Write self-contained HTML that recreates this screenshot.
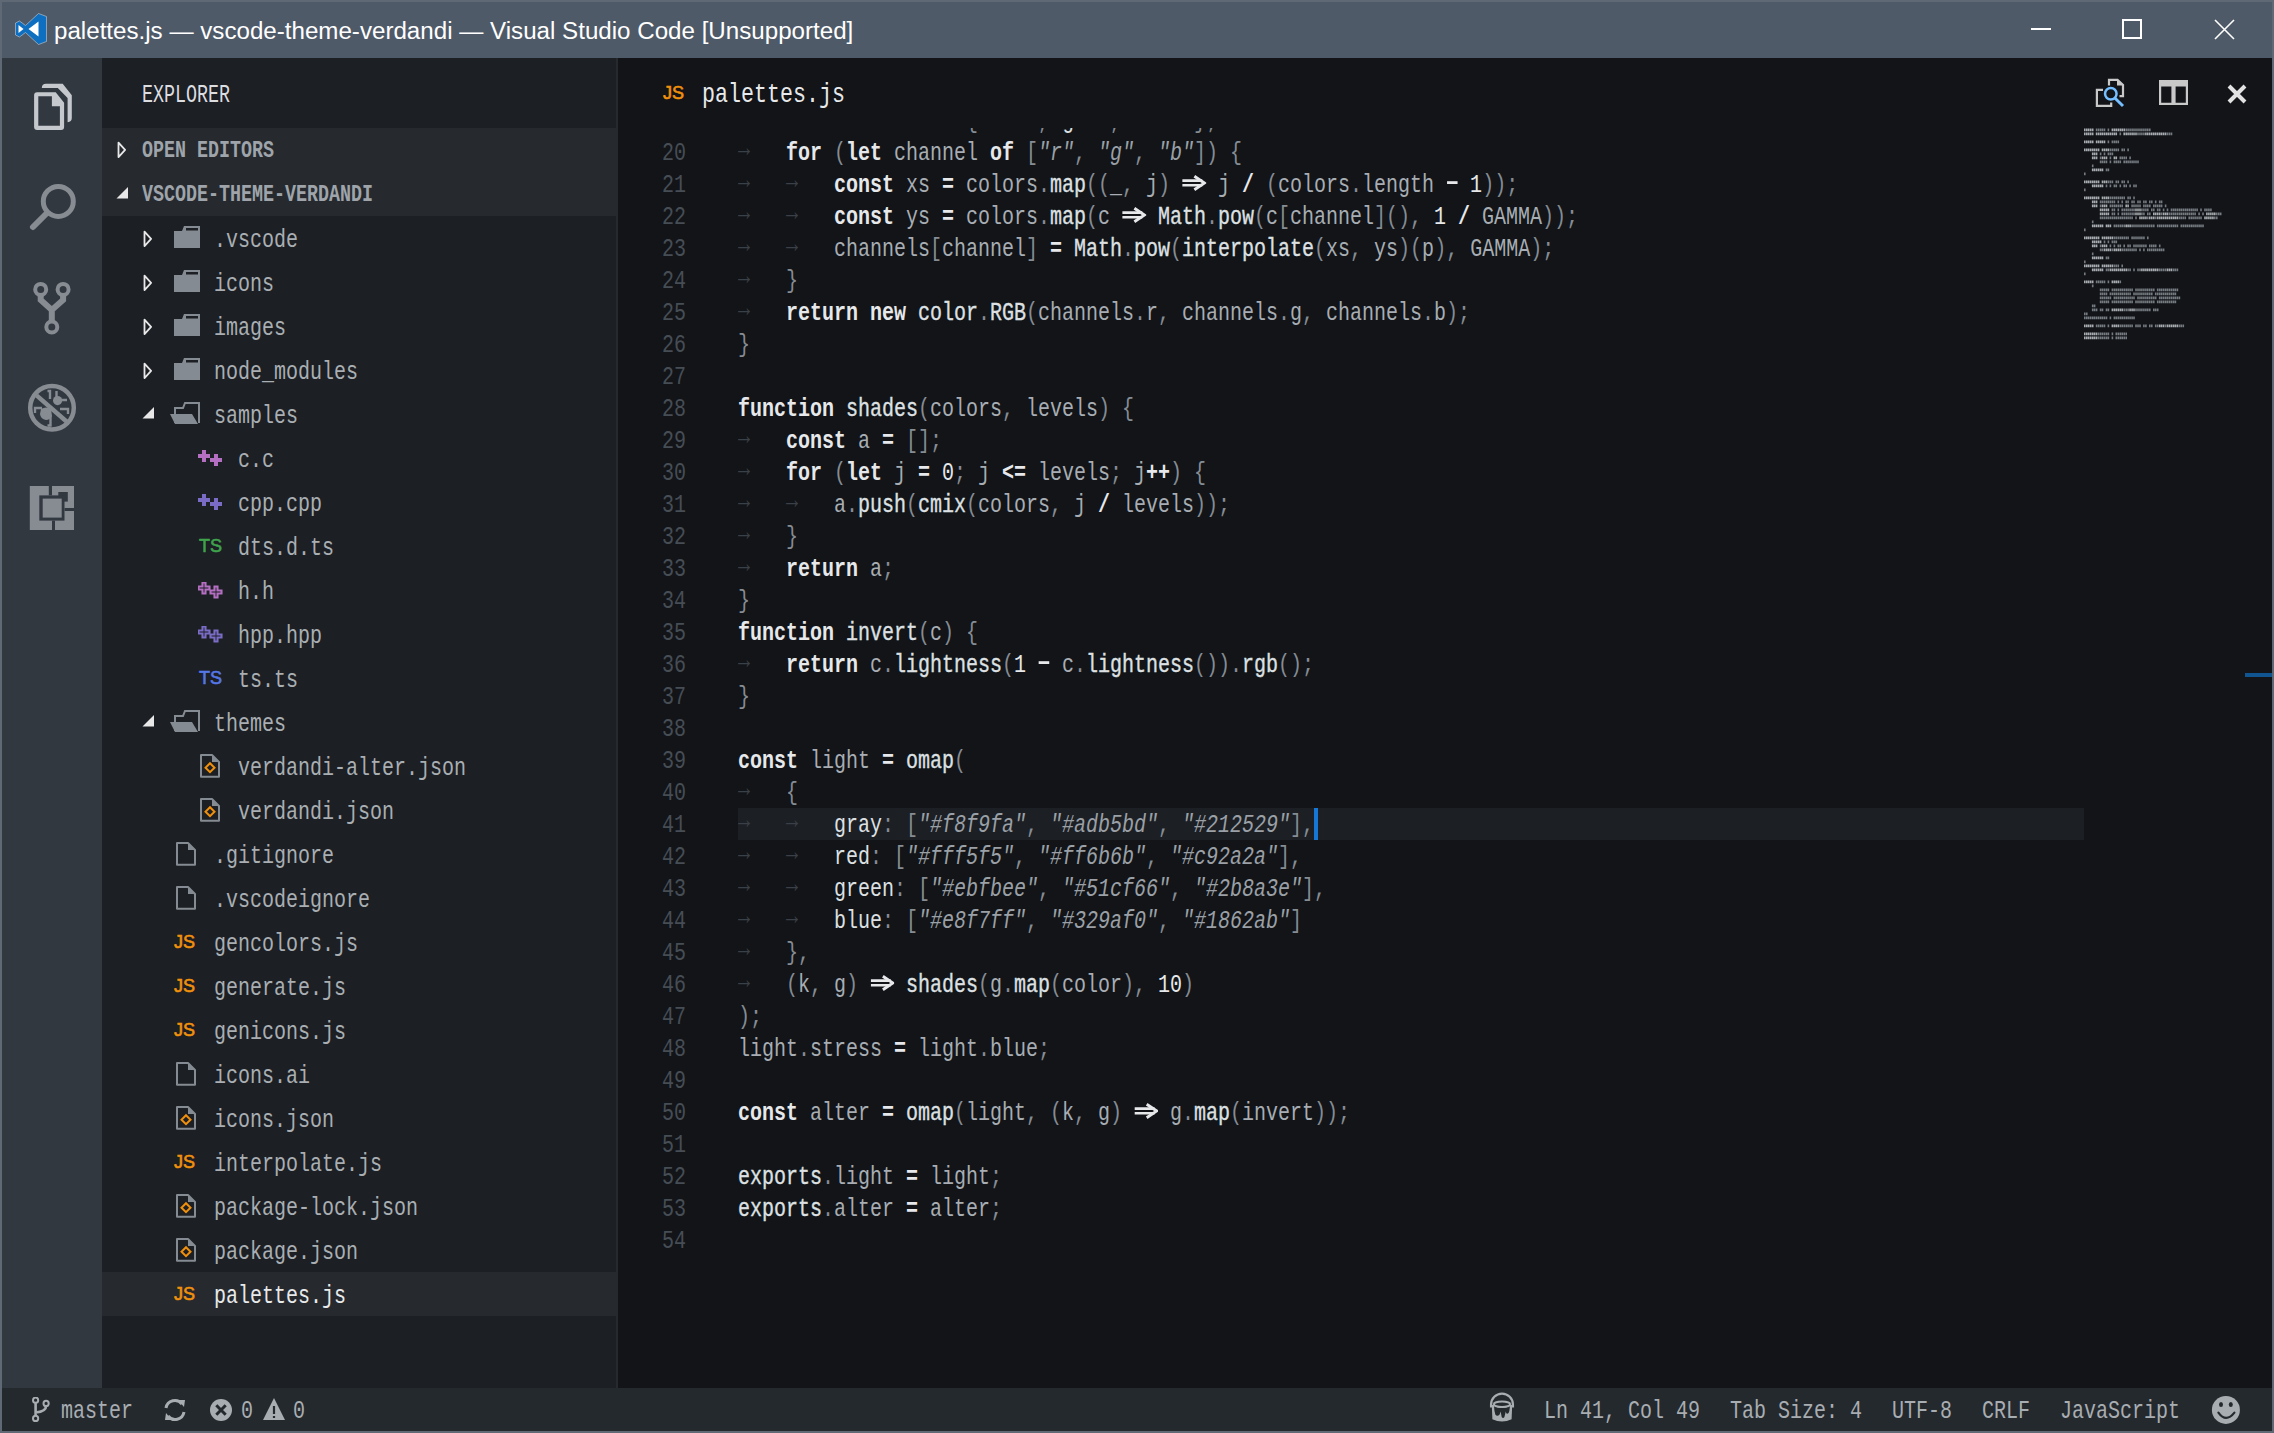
<!DOCTYPE html><html><head><meta charset="utf-8"><style>
*{margin:0;padding:0;box-sizing:border-box}
html,body{width:2274px;height:1433px;overflow:hidden;background:#5f6976}
.abs{position:absolute}
#title{left:2px;top:2px;width:2270px;height:56px;background:#4f5a68}
#act{left:2px;top:58px;width:100px;height:1330px;background:#323840}
#side{left:102px;top:58px;width:516px;height:1330px;background:#1c1f23;border-right:2px solid #262a2f}
#editor{left:618px;top:58px;width:1654px;height:1330px;background:#121418;overflow:hidden}
#status{left:2px;top:1388px;width:2270px;height:43px;background:#24292e}
.mono{font-family:'Liberation Mono', monospace;white-space:pre}
.ln{position:absolute;height:32px;line-height:32px;font-size:26px;transform:scaleX(0.76911);transform-origin:0 0;white-space:pre;font-family:'Liberation Mono', monospace}
.k{color:#e6e8ea;font-weight:bold} .b{color:#dde0e3} .f{color:#dde0e3;-webkit-text-stroke:0.35px #dde0e3} .v{color:#a7adb3} .p{color:#858c93}
.o{color:#e6e8ea;font-weight:bold} .n{color:#e6e8ea} .s{color:#9aa0a6;font-style:italic} .t{color:#3a4047;position:relative;top:-4px}
.num{color:#464d55}
.row{position:absolute;left:0;width:514px;height:44px}
.it{position:absolute;height:44px;line-height:44px;font-size:26px;transform:scaleX(0.76911);transform-origin:0 0;white-space:pre;font-family:'Liberation Mono', monospace;color:#a9aeb3}
</style></head><body><div id="title" class="abs">
<svg class="abs" style="left:12px;top:9px" width="36" height="36" viewBox="0 0 36 36">
<path d="M24.5 2.5 L32.5 5.5 L32.5 30.5 L24.5 33.5 L11.5 21.5 L5.5 26 L1.5 24 L1.5 12 L5.5 10 L11.5 14.5 Z" fill="#0e6fc0" stroke="#c8ccd2" stroke-width="0.6"/>
<path d="M4.5 14 L9.5 18 L4.5 22 Z" fill="#fff"/>
<path d="M24.5 10.5 L24.5 25.5 L14.5 18 Z" fill="#fff"/>
</svg>
<div class="abs" style="left:52px;top:1px;height:56px;line-height:56px;font-family:'Liberation Sans', sans-serif;font-size:24.15px;color:#fff;white-space:pre">palettes.js — vscode-theme-verdandi — Visual Studio Code [Unsupported]</div>
<div class="abs" style="left:2029px;top:26px;width:20px;height:2px;background:#fff"></div>
<div class="abs" style="left:2120px;top:17px;width:20px;height:20px;border:2px solid #fff"></div>
<svg class="abs" style="left:2212px;top:17px" width="21" height="21" viewBox="0 0 21 21"><path d="M1 1L20 20M20 1L1 20" stroke="#fff" stroke-width="1.6"/></svg>
</div><div id="act" class="abs">
<svg class="abs" style="left:0;top:0" width="100" height="500" viewBox="0 0 100 500">
 <path d="M39.8 30 Q40 25.8 44 25.8 L60.7 25.8 L69.8 37.3 L69.8 60 Q69.8 64 65.6 64.2 L65.6 40.1 L55.8 30 Z" fill="#c5c9cd"/>
 <path d="M35.1 34.2 H53.7 L62.1 44.7 V68.9 Q62.1 71.9 59.1 71.9 H35.1 Q32.1 71.9 32.1 68.9 V37.2 Q32.1 34.2 35.1 34.2 Z M36.3 38.2 H49.9 V48.2 H57.9 V67.7 H36.3 Z" fill="#c5c9cd" fill-rule="evenodd"/>
 <circle cx="56.3" cy="143.4" r="15" fill="none" stroke="#878c93" stroke-width="5"/>
 <path d="M45 155 L31 169" stroke="#878c93" stroke-width="6" stroke-linecap="round"/>
 <circle cx="38.7" cy="231.4" r="5.5" fill="none" stroke="#878c93" stroke-width="4"/>
 <circle cx="61.1" cy="231.4" r="5.5" fill="none" stroke="#878c93" stroke-width="4"/>
 <circle cx="49.8" cy="269" r="5.5" fill="none" stroke="#878c93" stroke-width="4"/>
 <path d="M38.7 236 L38.7 242 L49.8 252 L61.1 242 L61.1 236 M49.8 252 L49.8 264" fill="none" stroke="#878c93" stroke-width="6"/>
 <circle cx="50" cy="349.7" r="21.8" fill="none" stroke="#878c93" stroke-width="4.5"/>
 <path d="M34.5 337.4 L64.8 363.7" stroke="#878c93" stroke-width="4.5"/>
 <path d="M39 351 Q44 348 49 351 L50 358 Q48 362 44 362 Q38.5 361 38 356 Z" fill="#878c93"/>
 <circle cx="55.6" cy="342.6" r="4.6" fill="#878c93"/>
 <path d="M33 355 V350 H40 M48.5 358 V367.5 H45.5 M45.5 333 H48 V341 M54.5 333 V339 M57 342 H65 M58 351 H66 V356" fill="none" stroke="#878c93" stroke-width="2.4"/>
 <rect x="27.8" y="428" width="44.2" height="44" fill="#878c93"/>
 <rect x="46.8" y="428" width="3.2" height="9.4" fill="#323840"/>
 <rect x="50" y="462.6" width="3" height="9.4" fill="#323840"/>
 <rect x="62.5" y="450" width="9.5" height="3" fill="#323840"/>
 <rect x="56.3" y="434" width="9.5" height="9.6" fill="#323840"/>
 <rect x="37.3" y="437.4" width="25.2" height="25.2" fill="#323840"/>
 <rect x="40.7" y="440.6" width="19" height="19" fill="#878c93"/>
</svg>
</div><div id="side" class="abs"><div class="abs mono" style="left:40px;top:2px;height:72px;line-height:72px;font-size:25px;color:#dcdde0"><span style="display:inline-block;transform:scaleX(0.7332);transform-origin:0 0">EXPLORER</span></div><div class="abs" style="left:0;top:70px;width:516px;height:44px;background:#262a2f"><svg class="abs" style="left:15px;top:13px" width="10" height="18"><path d="M1.5 1.6 L1.5 16.1 L8.1 8.85 Z" fill="none" stroke="#e8e8e8" stroke-width="1.8" stroke-linejoin="round"/></svg>
<div class="abs mono" style="left:40px;top:1px;height:44px;line-height:44px;font-size:24px;font-weight:bold;color:#9ea4aa"><span style="display:inline-block;transform:scaleX(0.7638);transform-origin:0 0">OPEN EDITORS</span></div></div><div class="abs" style="left:0;top:114px;width:516px;height:44px;background:#262a2f"><svg class="abs" style="left:14px;top:15px" width="12" height="12"><path d="M12 0 L12 11.5 L0.5 11.5 Z" fill="#e8e8e8"/></svg>
<div class="abs mono" style="left:40px;top:1px;height:44px;line-height:44px;font-size:24px;font-weight:bold;color:#9ea4aa"><span style="display:inline-block;transform:scaleX(0.7638);transform-origin:0 0">VSCODE-THEME-VERDANDI</span></div></div><div class="row" style="top:158px;"></div><svg class="abs" style="left:41px;top:172px" width="10" height="18"><path d="M1.5 1.6 L1.5 16.1 L8.1 8.85 Z" fill="none" stroke="#e8e8e8" stroke-width="1.8" stroke-linejoin="round"/></svg><svg class="abs" style="left:72px;top:168px" width="28" height="24" viewBox="0 0 28 24"><path d="M0 5 L8 5 L10 0 L26 0 L26 22 L0 22 Z" fill="#858b92"/><rect x="12" y="2" width="12" height="2.5" fill="#1c1f23"/></svg><div class="it" style="left:112px;top:160px;color:#a9aeb3">.vscode</div><div class="row" style="top:202px;"></div><svg class="abs" style="left:41px;top:216px" width="10" height="18"><path d="M1.5 1.6 L1.5 16.1 L8.1 8.85 Z" fill="none" stroke="#e8e8e8" stroke-width="1.8" stroke-linejoin="round"/></svg><svg class="abs" style="left:72px;top:212px" width="28" height="24" viewBox="0 0 28 24"><path d="M0 5 L8 5 L10 0 L26 0 L26 22 L0 22 Z" fill="#858b92"/><rect x="12" y="2" width="12" height="2.5" fill="#1c1f23"/></svg><div class="it" style="left:112px;top:204px;color:#a9aeb3">icons</div><div class="row" style="top:246px;"></div><svg class="abs" style="left:41px;top:260px" width="10" height="18"><path d="M1.5 1.6 L1.5 16.1 L8.1 8.85 Z" fill="none" stroke="#e8e8e8" stroke-width="1.8" stroke-linejoin="round"/></svg><svg class="abs" style="left:72px;top:256px" width="28" height="24" viewBox="0 0 28 24"><path d="M0 5 L8 5 L10 0 L26 0 L26 22 L0 22 Z" fill="#858b92"/><rect x="12" y="2" width="12" height="2.5" fill="#1c1f23"/></svg><div class="it" style="left:112px;top:248px;color:#a9aeb3">images</div><div class="row" style="top:290px;"></div><svg class="abs" style="left:41px;top:304px" width="10" height="18"><path d="M1.5 1.6 L1.5 16.1 L8.1 8.85 Z" fill="none" stroke="#e8e8e8" stroke-width="1.8" stroke-linejoin="round"/></svg><svg class="abs" style="left:72px;top:300px" width="28" height="24" viewBox="0 0 28 24"><path d="M0 5 L8 5 L10 0 L26 0 L26 22 L0 22 Z" fill="#858b92"/><rect x="12" y="2" width="12" height="2.5" fill="#1c1f23"/></svg><div class="it" style="left:112px;top:292px;color:#a9aeb3">node_modules</div><div class="row" style="top:334px;"></div><svg class="abs" style="left:40px;top:349px" width="12" height="12"><path d="M12 0 L12 11.5 L0.5 11.5 Z" fill="#e8e8e8"/></svg><svg class="abs" style="left:68px;top:344px" width="32" height="24" viewBox="0 0 32 24"><path d="M5 21 L5 6 L13 6 L15 1 L29 1 L29 21" fill="none" stroke="#858b92" stroke-width="2"/><path d="M0 12 L22 12 L28 22 L5 22 Z" fill="#858b92"/></svg><div class="it" style="left:112px;top:336px;color:#a9aeb3">samples</div><div class="row" style="top:378px;"></div><svg class="abs" style="left:96px;top:392px" width="26" height="18" viewBox="0 0 26 18"><path d="M0 4 L12 4 L12 8 L0 8 Z M4 0 L8 0 L8 12 L4 12 Z M12 8 L24 8 L24 12 L12 12 Z M16 4 L20 4 L20 16 L16 16 Z" fill="#b46fc2"/></svg><div class="it" style="left:136px;top:380px;color:#a9aeb3">c.c</div><div class="row" style="top:422px;"></div><svg class="abs" style="left:96px;top:436px" width="26" height="18" viewBox="0 0 26 18"><path d="M0 4 L12 4 L12 8 L0 8 Z M4 0 L8 0 L8 12 L4 12 Z M12 8 L24 8 L24 12 L12 12 Z M16 4 L20 4 L20 16 L16 16 Z" fill="#7a6cc6"/></svg><div class="it" style="left:136px;top:424px;color:#a9aeb3">cpp.cpp</div><div class="row" style="top:466px;"></div><div class="abs" style="left:97px;top:478px;font-family:'Liberation Sans', sans-serif;font-size:18px;-webkit-text-stroke:0.6px #3fa34d;line-height:20px;color:#3fa34d;white-space:pre">TS</div><div class="it" style="left:136px;top:468px;color:#a9aeb3">dts.d.ts</div><div class="row" style="top:510px;"></div><svg class="abs" style="left:96px;top:524px" width="26" height="18" viewBox="0 0 26 18"><path d="M4.5 0.5 L7.5 0.5 L7.5 4.5 L11.5 4.5 L11.5 7.5 L7.5 7.5 L7.5 11.5 L4.5 11.5 L4.5 7.5 L0.5 7.5 L0.5 4.5 L4.5 4.5 Z M16.5 4.5 L19.5 4.5 L19.5 8.5 L23.5 8.5 L23.5 11.5 L19.5 11.5 L19.5 15.5 L16.5 15.5 L16.5 11.5 L12.5 11.5 L12.5 8.5 L16.5 8.5 Z" fill="none" stroke="#b46fc2" stroke-width="2.1"/></svg><div class="it" style="left:136px;top:512px;color:#a9aeb3">h.h</div><div class="row" style="top:554px;"></div><svg class="abs" style="left:96px;top:568px" width="26" height="18" viewBox="0 0 26 18"><path d="M4.5 0.5 L7.5 0.5 L7.5 4.5 L11.5 4.5 L11.5 7.5 L7.5 7.5 L7.5 11.5 L4.5 11.5 L4.5 7.5 L0.5 7.5 L0.5 4.5 L4.5 4.5 Z M16.5 4.5 L19.5 4.5 L19.5 8.5 L23.5 8.5 L23.5 11.5 L19.5 11.5 L19.5 15.5 L16.5 15.5 L16.5 11.5 L12.5 11.5 L12.5 8.5 L16.5 8.5 Z" fill="none" stroke="#7a6cc6" stroke-width="2.1"/></svg><div class="it" style="left:136px;top:556px;color:#a9aeb3">hpp.hpp</div><div class="row" style="top:598px;"></div><div class="abs" style="left:97px;top:610px;font-family:'Liberation Sans', sans-serif;font-size:18px;-webkit-text-stroke:0.6px #5577e8;line-height:20px;color:#5577e8;white-space:pre">TS</div><div class="it" style="left:136px;top:600px;color:#a9aeb3">ts.ts</div><div class="row" style="top:642px;"></div><svg class="abs" style="left:40px;top:657px" width="12" height="12"><path d="M12 0 L12 11.5 L0.5 11.5 Z" fill="#e8e8e8"/></svg><svg class="abs" style="left:68px;top:652px" width="32" height="24" viewBox="0 0 32 24"><path d="M5 21 L5 6 L13 6 L15 1 L29 1 L29 21" fill="none" stroke="#858b92" stroke-width="2"/><path d="M0 12 L22 12 L28 22 L5 22 Z" fill="#858b92"/></svg><div class="it" style="left:112px;top:644px;color:#a9aeb3">themes</div><div class="row" style="top:686px;"></div><svg class="abs" style="left:97px;top:696px" width="22" height="26" viewBox="0 0 22 26"><path d="M2 1 L13 1 L20 8 L20 22.8 L2 22.8 Z" fill="none" stroke="#858b92" stroke-width="2" stroke-linejoin="round"/><path d="M13 1 L20 8 L13 8 Z" fill="#858b92"/><path d="M11 9.2 L15.5 13.7 L11 18.2 L6.5 13.7 Z" fill="none" stroke="#f0900c" stroke-width="2"/></svg><div class="it" style="left:136px;top:688px;color:#a9aeb3">verdandi-alter.json</div><div class="row" style="top:730px;"></div><svg class="abs" style="left:97px;top:740px" width="22" height="26" viewBox="0 0 22 26"><path d="M2 1 L13 1 L20 8 L20 22.8 L2 22.8 Z" fill="none" stroke="#858b92" stroke-width="2" stroke-linejoin="round"/><path d="M13 1 L20 8 L13 8 Z" fill="#858b92"/><path d="M11 9.2 L15.5 13.7 L11 18.2 L6.5 13.7 Z" fill="none" stroke="#f0900c" stroke-width="2"/></svg><div class="it" style="left:136px;top:732px;color:#a9aeb3">verdandi.json</div><div class="row" style="top:774px;"></div><svg class="abs" style="left:73px;top:784px" width="22" height="26" viewBox="0 0 22 26"><path d="M2 1 L13 1 L20 8 L20 22.8 L2 22.8 Z" fill="none" stroke="#858b92" stroke-width="2" stroke-linejoin="round"/><path d="M13 1 L20 8 L13 8 Z" fill="#858b92"/></svg><div class="it" style="left:112px;top:776px;color:#a9aeb3">.gitignore</div><div class="row" style="top:818px;"></div><svg class="abs" style="left:73px;top:828px" width="22" height="26" viewBox="0 0 22 26"><path d="M2 1 L13 1 L20 8 L20 22.8 L2 22.8 Z" fill="none" stroke="#858b92" stroke-width="2" stroke-linejoin="round"/><path d="M13 1 L20 8 L13 8 Z" fill="#858b92"/></svg><div class="it" style="left:112px;top:820px;color:#a9aeb3">.vscodeignore</div><div class="row" style="top:862px;"></div><div class="abs" style="left:72px;top:874px;font-family:'Liberation Sans', sans-serif;font-size:18px;-webkit-text-stroke:0.6px #f0900c;line-height:20px;color:#f0900c;white-space:pre">JS</div><div class="it" style="left:112px;top:864px;color:#a9aeb3">gencolors.js</div><div class="row" style="top:906px;"></div><div class="abs" style="left:72px;top:918px;font-family:'Liberation Sans', sans-serif;font-size:18px;-webkit-text-stroke:0.6px #f0900c;line-height:20px;color:#f0900c;white-space:pre">JS</div><div class="it" style="left:112px;top:908px;color:#a9aeb3">generate.js</div><div class="row" style="top:950px;"></div><div class="abs" style="left:72px;top:962px;font-family:'Liberation Sans', sans-serif;font-size:18px;-webkit-text-stroke:0.6px #f0900c;line-height:20px;color:#f0900c;white-space:pre">JS</div><div class="it" style="left:112px;top:952px;color:#a9aeb3">genicons.js</div><div class="row" style="top:994px;"></div><svg class="abs" style="left:73px;top:1004px" width="22" height="26" viewBox="0 0 22 26"><path d="M2 1 L13 1 L20 8 L20 22.8 L2 22.8 Z" fill="none" stroke="#858b92" stroke-width="2" stroke-linejoin="round"/><path d="M13 1 L20 8 L13 8 Z" fill="#858b92"/></svg><div class="it" style="left:112px;top:996px;color:#a9aeb3">icons.ai</div><div class="row" style="top:1038px;"></div><svg class="abs" style="left:73px;top:1048px" width="22" height="26" viewBox="0 0 22 26"><path d="M2 1 L13 1 L20 8 L20 22.8 L2 22.8 Z" fill="none" stroke="#858b92" stroke-width="2" stroke-linejoin="round"/><path d="M13 1 L20 8 L13 8 Z" fill="#858b92"/><path d="M11 9.2 L15.5 13.7 L11 18.2 L6.5 13.7 Z" fill="none" stroke="#f0900c" stroke-width="2"/></svg><div class="it" style="left:112px;top:1040px;color:#a9aeb3">icons.json</div><div class="row" style="top:1082px;"></div><div class="abs" style="left:72px;top:1094px;font-family:'Liberation Sans', sans-serif;font-size:18px;-webkit-text-stroke:0.6px #f0900c;line-height:20px;color:#f0900c;white-space:pre">JS</div><div class="it" style="left:112px;top:1084px;color:#a9aeb3">interpolate.js</div><div class="row" style="top:1126px;"></div><svg class="abs" style="left:73px;top:1136px" width="22" height="26" viewBox="0 0 22 26"><path d="M2 1 L13 1 L20 8 L20 22.8 L2 22.8 Z" fill="none" stroke="#858b92" stroke-width="2" stroke-linejoin="round"/><path d="M13 1 L20 8 L13 8 Z" fill="#858b92"/><path d="M11 9.2 L15.5 13.7 L11 18.2 L6.5 13.7 Z" fill="none" stroke="#f0900c" stroke-width="2"/></svg><div class="it" style="left:112px;top:1128px;color:#a9aeb3">package-lock.json</div><div class="row" style="top:1170px;"></div><svg class="abs" style="left:73px;top:1180px" width="22" height="26" viewBox="0 0 22 26"><path d="M2 1 L13 1 L20 8 L20 22.8 L2 22.8 Z" fill="none" stroke="#858b92" stroke-width="2" stroke-linejoin="round"/><path d="M13 1 L20 8 L13 8 Z" fill="#858b92"/><path d="M11 9.2 L15.5 13.7 L11 18.2 L6.5 13.7 Z" fill="none" stroke="#f0900c" stroke-width="2"/></svg><div class="it" style="left:112px;top:1172px;color:#a9aeb3">package.json</div><div class="row" style="top:1214px;background:#262a2f;"></div><div class="abs" style="left:72px;top:1226px;font-family:'Liberation Sans', sans-serif;font-size:18px;-webkit-text-stroke:0.6px #f0900c;line-height:20px;color:#f0900c;white-space:pre">JS</div><div class="it" style="left:112px;top:1216px;color:#e8e9eb">palettes.js</div></div><div id="editor" class="abs"><div class="abs" style="left:45px;top:25px;font-family:'Liberation Sans', sans-serif;font-size:18px;-webkit-text-stroke:0.6px #f0900c;line-height:20px;color:#f0900c;white-space:pre">JS</div><div class="abs mono" style="left:84px;top:15px;height:44px;line-height:44px;font-size:28px;color:#e8e9eb"><span style="display:inline-block;transform:scaleX(0.7737);transform-origin:0 0">palettes.js</span></div><svg class="abs" style="left:1470px;top:14px" width="40" height="40" viewBox="0 0 40 40">
<path d="M21 13.5 V7.8 H29.5 L35 13 V24.1 H31.5" fill="none" stroke="#c8c8c8" stroke-width="2.2"/>
<path d="M29 6.7 L36.1 13.5 L29 13.5 Z" fill="#c8c8c8"/>
<path d="M15 17.9 H8.9 V33.9 H23.2 V30.5" fill="none" stroke="#c8c8c8" stroke-width="2.2"/>
<circle cx="22.8" cy="21.8" r="5.75" fill="none" stroke="#75beff" stroke-width="2.5"/>
<path d="M26.6 25.8 L35 34" stroke="#75beff" stroke-width="3"/>
</svg><svg class="abs" style="left:1541px;top:22px" width="30" height="26" viewBox="0 0 30 26">
<path d="M0 0 H29 V25 H0 Z M2.2 6.5 V22.8 H12.4 V6.5 Z M16.6 6.5 V22.8 H26.8 V6.5 Z" fill="#c8c8c8" fill-rule="evenodd"/>
</svg><svg class="abs" style="left:1609px;top:26px" width="20" height="20" viewBox="0 0 20 20">
<path d="M2 2 L18 18 M18 2 L2 18" stroke="#e2e2e2" stroke-width="4"/>
</svg><div class="abs" style="left:0;top:70px;width:1654px;height:1260px;overflow:hidden"><div class="abs" style="left:120px;top:680px;width:1346px;height:32px;background:#1c1f24"></div><div class="ln num" style="left:44px;top:-23px">19</div><div class="ln" style="left:120px;top:-23px"><span class="t">→   </span><span class="k">let</span><span class="v"> channels </span><span class="o">=</span><span class="p"> { </span><span class="b">r</span><span class="p">: </span><span class="n">0</span><span class="p">, </span><span class="b">g</span><span class="p">: </span><span class="n">0</span><span class="p">, </span><span class="b">b</span><span class="p">: </span><span class="n">0</span><span class="p"> };</span></div><div class="ln num" style="left:44px;top:9px">20</div><div class="ln" style="left:120px;top:9px"><span class="t">→   </span><span class="k">for</span><span class="p"> (</span><span class="k">let</span><span class="v"> channel </span><span class="k">of</span><span class="p"> [</span><span class="s">"r"</span><span class="p">, </span><span class="s">"g"</span><span class="p">, </span><span class="s">"b"</span><span class="p">])</span><span class="p"> {</span></div><div class="ln num" style="left:44px;top:41px">21</div><div class="ln" style="left:120px;top:41px"><span class="t">→   </span><span class="t">→   </span><span class="k">const</span><span class="v"> xs </span><span class="o">=</span><span class="v"> colors</span><span class="p">.</span><span class="f">map</span><span class="p">((</span><span class="v">_</span><span class="p">, </span><span class="v">j</span><span class="p">) </span><span style="display:inline-block;width:31.205px;height:32px;vertical-align:top"><svg width="31.205" height="32" viewBox="0 0 24 32" preserveAspectRatio="none" style="display:block"><path d="M0.6 11.6 H20.5 M0.6 16.3 H20.5" stroke="#e6e8ea" stroke-width="2.6" fill="none"/><path d="M12.6 7.2 L22.6 13.95 L12.6 20.7" stroke="#e6e8ea" stroke-width="2.9" fill="none"/></svg></span><span class="v"> j </span><span class="o">/</span><span class="p"> (</span><span class="v">colors</span><span class="p">.</span><span class="v">length </span><span style="display:inline-block;width:15.603px;height:32px;vertical-align:top"><svg width="15.603" height="32" viewBox="0 0 12 32" preserveAspectRatio="none" style="display:block"><rect x="0.7" y="12.2" width="10.6" height="2.8" fill="#e6e8ea"/></svg></span><span class="n"> 1</span><span class="p">));</span></div><div class="ln num" style="left:44px;top:73px">22</div><div class="ln" style="left:120px;top:73px"><span class="t">→   </span><span class="t">→   </span><span class="k">const</span><span class="v"> ys </span><span class="o">=</span><span class="v"> colors</span><span class="p">.</span><span class="f">map</span><span class="p">(</span><span class="v">c </span><span style="display:inline-block;width:31.205px;height:32px;vertical-align:top"><svg width="31.205" height="32" viewBox="0 0 24 32" preserveAspectRatio="none" style="display:block"><path d="M0.6 11.6 H20.5 M0.6 16.3 H20.5" stroke="#e6e8ea" stroke-width="2.6" fill="none"/><path d="M12.6 7.2 L22.6 13.95 L12.6 20.7" stroke="#e6e8ea" stroke-width="2.9" fill="none"/></svg></span><span class="f"> Math</span><span class="p">.</span><span class="f">pow</span><span class="p">(</span><span class="v">c</span><span class="p">[</span><span class="v">channel</span><span class="p">](), </span><span class="n">1 </span><span class="o">/</span><span class="v"> GAMMA</span><span class="p">));</span></div><div class="ln num" style="left:44px;top:105px">23</div><div class="ln" style="left:120px;top:105px"><span class="t">→   </span><span class="t">→   </span><span class="v">channels</span><span class="p">[</span><span class="v">channel</span><span class="p">] </span><span class="o">=</span><span class="f"> Math</span><span class="p">.</span><span class="f">pow</span><span class="p">(</span><span class="f">interpolate</span><span class="p">(</span><span class="v">xs</span><span class="p">, </span><span class="v">ys</span><span class="p">)(</span><span class="v">p</span><span class="p">), </span><span class="v">GAMMA</span><span class="p">);</span></div><div class="ln num" style="left:44px;top:137px">24</div><div class="ln" style="left:120px;top:137px"><span class="t">→   </span><span class="p">}</span></div><div class="ln num" style="left:44px;top:169px">25</div><div class="ln" style="left:120px;top:169px"><span class="t">→   </span><span class="k">return new</span><span class="f"> color</span><span class="p">.</span><span class="f">RGB</span><span class="p">(</span><span class="v">channels</span><span class="p">.</span><span class="v">r</span><span class="p">, </span><span class="v">channels</span><span class="p">.</span><span class="v">g</span><span class="p">, </span><span class="v">channels</span><span class="p">.</span><span class="v">b</span><span class="p">);</span></div><div class="ln num" style="left:44px;top:201px">26</div><div class="ln" style="left:120px;top:201px"><span class="p">}</span></div><div class="ln num" style="left:44px;top:233px">27</div><div class="ln" style="left:120px;top:233px"></div><div class="ln num" style="left:44px;top:265px">28</div><div class="ln" style="left:120px;top:265px"><span class="k">function</span><span class="f"> shades</span><span class="p">(</span><span class="v">colors</span><span class="p">, </span><span class="v">levels</span><span class="p">) {</span></div><div class="ln num" style="left:44px;top:297px">29</div><div class="ln" style="left:120px;top:297px"><span class="t">→   </span><span class="k">const</span><span class="v"> a </span><span class="o">=</span><span class="p"> [];</span></div><div class="ln num" style="left:44px;top:329px">30</div><div class="ln" style="left:120px;top:329px"><span class="t">→   </span><span class="k">for</span><span class="p"> (</span><span class="k">let</span><span class="v"> j </span><span class="o">=</span><span class="n"> 0</span><span class="p">; </span><span class="v">j </span><span class="o">&lt;=</span><span class="v"> levels</span><span class="p">; </span><span class="v">j</span><span class="o">++</span><span class="p">) {</span></div><div class="ln num" style="left:44px;top:361px">31</div><div class="ln" style="left:120px;top:361px"><span class="t">→   </span><span class="t">→   </span><span class="v">a</span><span class="p">.</span><span class="f">push</span><span class="p">(</span><span class="f">cmix</span><span class="p">(</span><span class="v">colors</span><span class="p">, </span><span class="v">j </span><span class="o">/</span><span class="v"> levels</span><span class="p">));</span></div><div class="ln num" style="left:44px;top:393px">32</div><div class="ln" style="left:120px;top:393px"><span class="t">→   </span><span class="p">}</span></div><div class="ln num" style="left:44px;top:425px">33</div><div class="ln" style="left:120px;top:425px"><span class="t">→   </span><span class="k">return</span><span class="v"> a</span><span class="p">;</span></div><div class="ln num" style="left:44px;top:457px">34</div><div class="ln" style="left:120px;top:457px"><span class="p">}</span></div><div class="ln num" style="left:44px;top:489px">35</div><div class="ln" style="left:120px;top:489px"><span class="k">function</span><span class="f"> invert</span><span class="p">(</span><span class="v">c</span><span class="p">) {</span></div><div class="ln num" style="left:44px;top:521px">36</div><div class="ln" style="left:120px;top:521px"><span class="t">→   </span><span class="k">return</span><span class="v"> c</span><span class="p">.</span><span class="f">lightness</span><span class="p">(</span><span class="n">1 </span><span style="display:inline-block;width:15.603px;height:32px;vertical-align:top"><svg width="15.603" height="32" viewBox="0 0 12 32" preserveAspectRatio="none" style="display:block"><rect x="0.7" y="12.2" width="10.6" height="2.8" fill="#e6e8ea"/></svg></span><span class="v"> c</span><span class="p">.</span><span class="f">lightness</span><span class="p">()).</span><span class="f">rgb</span><span class="p">();</span></div><div class="ln num" style="left:44px;top:553px">37</div><div class="ln" style="left:120px;top:553px"><span class="p">}</span></div><div class="ln num" style="left:44px;top:585px">38</div><div class="ln" style="left:120px;top:585px"></div><div class="ln num" style="left:44px;top:617px">39</div><div class="ln" style="left:120px;top:617px"><span class="k">const</span><span class="v"> light </span><span class="o">=</span><span class="f"> omap</span><span class="p">(</span></div><div class="ln num" style="left:44px;top:649px">40</div><div class="ln" style="left:120px;top:649px"><span class="t">→   </span><span class="p">{</span></div><div class="ln num" style="left:44px;top:681px">41</div><div class="ln" style="left:120px;top:681px"><span class="t">→   </span><span class="t">→   </span><span class="b">gray</span><span class="p">: [</span><span class="s">"#f8f9fa"</span><span class="p">, </span><span class="s">"#adb5bd"</span><span class="p">, </span><span class="s">"#212529"</span><span class="p">],</span></div><div class="ln num" style="left:44px;top:713px">42</div><div class="ln" style="left:120px;top:713px"><span class="t">→   </span><span class="t">→   </span><span class="b">red</span><span class="p">: [</span><span class="s">"#fff5f5"</span><span class="p">, </span><span class="s">"#ff6b6b"</span><span class="p">, </span><span class="s">"#c92a2a"</span><span class="p">],</span></div><div class="ln num" style="left:44px;top:745px">43</div><div class="ln" style="left:120px;top:745px"><span class="t">→   </span><span class="t">→   </span><span class="b">green</span><span class="p">: [</span><span class="s">"#ebfbee"</span><span class="p">, </span><span class="s">"#51cf66"</span><span class="p">, </span><span class="s">"#2b8a3e"</span><span class="p">],</span></div><div class="ln num" style="left:44px;top:777px">44</div><div class="ln" style="left:120px;top:777px"><span class="t">→   </span><span class="t">→   </span><span class="b">blue</span><span class="p">: [</span><span class="s">"#e8f7ff"</span><span class="p">, </span><span class="s">"#329af0"</span><span class="p">, </span><span class="s">"#1862ab"</span><span class="p">]</span></div><div class="ln num" style="left:44px;top:809px">45</div><div class="ln" style="left:120px;top:809px"><span class="t">→   </span><span class="p">},</span></div><div class="ln num" style="left:44px;top:841px">46</div><div class="ln" style="left:120px;top:841px"><span class="t">→   </span><span class="p">(</span><span class="v">k</span><span class="p">, </span><span class="v">g</span><span class="p">) </span><span style="display:inline-block;width:31.205px;height:32px;vertical-align:top"><svg width="31.205" height="32" viewBox="0 0 24 32" preserveAspectRatio="none" style="display:block"><path d="M0.6 11.6 H20.5 M0.6 16.3 H20.5" stroke="#e6e8ea" stroke-width="2.6" fill="none"/><path d="M12.6 7.2 L22.6 13.95 L12.6 20.7" stroke="#e6e8ea" stroke-width="2.9" fill="none"/></svg></span><span class="f"> shades</span><span class="p">(</span><span class="v">g</span><span class="p">.</span><span class="f">map</span><span class="p">(</span><span class="v">color</span><span class="p">), </span><span class="n">10</span><span class="p">)</span></div><div class="ln num" style="left:44px;top:873px">47</div><div class="ln" style="left:120px;top:873px"><span class="p">);</span></div><div class="ln num" style="left:44px;top:905px">48</div><div class="ln" style="left:120px;top:905px"><span class="v">light</span><span class="p">.</span><span class="v">stress </span><span class="o">=</span><span class="v"> light</span><span class="p">.</span><span class="v">blue</span><span class="p">;</span></div><div class="ln num" style="left:44px;top:937px">49</div><div class="ln" style="left:120px;top:937px"></div><div class="ln num" style="left:44px;top:969px">50</div><div class="ln" style="left:120px;top:969px"><span class="k">const</span><span class="v"> alter </span><span class="o">=</span><span class="f"> omap</span><span class="p">(</span><span class="v">light</span><span class="p">, (</span><span class="v">k</span><span class="p">, </span><span class="v">g</span><span class="p">) </span><span style="display:inline-block;width:31.205px;height:32px;vertical-align:top"><svg width="31.205" height="32" viewBox="0 0 24 32" preserveAspectRatio="none" style="display:block"><path d="M0.6 11.6 H20.5 M0.6 16.3 H20.5" stroke="#e6e8ea" stroke-width="2.6" fill="none"/><path d="M12.6 7.2 L22.6 13.95 L12.6 20.7" stroke="#e6e8ea" stroke-width="2.9" fill="none"/></svg></span><span class="v"> g</span><span class="p">.</span><span class="f">map</span><span class="p">(</span><span class="v">invert</span><span class="p">));</span></div><div class="ln num" style="left:44px;top:1001px">51</div><div class="ln" style="left:120px;top:1001px"></div><div class="ln num" style="left:44px;top:1033px">52</div><div class="ln" style="left:120px;top:1033px"><span class="f">exports</span><span class="p">.</span><span class="v">light </span><span class="o">=</span><span class="v"> light</span><span class="p">;</span></div><div class="ln num" style="left:44px;top:1065px">53</div><div class="ln" style="left:120px;top:1065px"><span class="f">exports</span><span class="p">.</span><span class="v">alter </span><span class="o">=</span><span class="v"> alter</span><span class="p">;</span></div><div class="ln num" style="left:44px;top:1097px">54</div><div class="ln" style="left:120px;top:1097px"></div><div class="abs" style="left:696px;top:680px;width:4px;height:32px;background:#1577d6"></div></div><svg class="abs" style="left:1466px;top:70px" width="180" height="230"><path d="M0.0 0.5h1.6v2.8h-1.6zM2.0 0.5h1.6v2.8h-1.6zM3.9 0.5h1.6v2.8h-1.6zM5.9 0.5h1.6v2.8h-1.6zM7.9 0.5h1.6v2.8h-1.6zM27.6 0.5h1.6v2.8h-1.6zM29.6 0.5h1.6v2.8h-1.6zM31.5 0.5h1.6v2.8h-1.6zM33.5 0.5h1.6v2.8h-1.6zM35.5 0.5h1.6v2.8h-1.6zM37.4 0.5h1.6v2.8h-1.6zM39.4 0.5h1.6v2.8h-1.6zM0.0 4.5h1.6v2.8h-1.6zM2.0 4.5h1.6v2.8h-1.6zM3.9 4.5h1.6v2.8h-1.6zM5.9 4.5h1.6v2.8h-1.6zM7.9 4.5h1.6v2.8h-1.6zM11.8 4.5h1.6v2.8h-1.6zM13.8 4.5h1.6v2.8h-1.6zM15.8 4.5h1.6v2.8h-1.6zM17.7 4.5h1.6v2.8h-1.6zM19.7 4.5h1.6v2.8h-1.6zM21.7 4.5h1.6v2.8h-1.6zM23.6 4.5h1.6v2.8h-1.6zM25.6 4.5h1.6v2.8h-1.6zM27.6 4.5h1.6v2.8h-1.6zM29.6 4.5h1.6v2.8h-1.6zM31.5 4.5h1.6v2.8h-1.6zM39.4 4.5h1.6v2.8h-1.6zM41.4 4.5h1.6v2.8h-1.6zM43.3 4.5h1.6v2.8h-1.6zM45.3 4.5h1.6v2.8h-1.6zM47.3 4.5h1.6v2.8h-1.6zM49.2 4.5h1.6v2.8h-1.6zM51.2 4.5h1.6v2.8h-1.6zM61.1 4.5h1.6v2.8h-1.6zM63.0 4.5h1.6v2.8h-1.6zM65.0 4.5h1.6v2.8h-1.6zM67.0 4.5h1.6v2.8h-1.6zM69.0 4.5h1.6v2.8h-1.6zM70.9 4.5h1.6v2.8h-1.6zM72.9 4.5h1.6v2.8h-1.6zM74.9 4.5h1.6v2.8h-1.6zM76.8 4.5h1.6v2.8h-1.6zM78.8 4.5h1.6v2.8h-1.6zM80.8 4.5h1.6v2.8h-1.6zM0.0 12.5h1.6v2.8h-1.6zM2.0 12.5h1.6v2.8h-1.6zM3.9 12.5h1.6v2.8h-1.6zM5.9 12.5h1.6v2.8h-1.6zM7.9 12.5h1.6v2.8h-1.6zM11.8 12.5h1.6v2.8h-1.6zM13.8 12.5h1.6v2.8h-1.6zM15.8 12.5h1.6v2.8h-1.6zM17.7 12.5h1.6v2.8h-1.6zM19.7 12.5h1.6v2.8h-1.6zM0.0 20.5h1.6v2.8h-1.6zM2.0 20.5h1.6v2.8h-1.6zM3.9 20.5h1.6v2.8h-1.6zM5.9 20.5h1.6v2.8h-1.6zM7.9 20.5h1.6v2.8h-1.6zM9.8 20.5h1.6v2.8h-1.6zM11.8 20.5h1.6v2.8h-1.6zM13.8 20.5h1.6v2.8h-1.6zM17.7 20.5h1.6v2.8h-1.6zM19.7 20.5h1.6v2.8h-1.6zM21.7 20.5h1.6v2.8h-1.6zM23.6 20.5h1.6v2.8h-1.6zM7.9 24.5h1.6v2.8h-1.6zM9.8 24.5h1.6v2.8h-1.6zM11.8 24.5h1.6v2.8h-1.6zM7.9 28.5h1.6v2.8h-1.6zM9.8 28.5h1.6v2.8h-1.6zM11.8 28.5h1.6v2.8h-1.6zM17.7 28.5h1.6v2.8h-1.6zM19.7 28.5h1.6v2.8h-1.6zM21.7 28.5h1.6v2.8h-1.6zM29.6 28.5h1.6v2.8h-1.6zM31.5 28.5h1.6v2.8h-1.6zM7.9 40.5h1.6v2.8h-1.6zM9.8 40.5h1.6v2.8h-1.6zM11.8 40.5h1.6v2.8h-1.6zM13.8 40.5h1.6v2.8h-1.6zM15.8 40.5h1.6v2.8h-1.6zM17.7 40.5h1.6v2.8h-1.6zM0.0 52.5h1.6v2.8h-1.6zM2.0 52.5h1.6v2.8h-1.6zM3.9 52.5h1.6v2.8h-1.6zM5.9 52.5h1.6v2.8h-1.6zM7.9 52.5h1.6v2.8h-1.6zM9.8 52.5h1.6v2.8h-1.6zM11.8 52.5h1.6v2.8h-1.6zM13.8 52.5h1.6v2.8h-1.6zM17.7 52.5h1.6v2.8h-1.6zM19.7 52.5h1.6v2.8h-1.6zM21.7 52.5h1.6v2.8h-1.6zM7.9 56.5h1.6v2.8h-1.6zM9.8 56.5h1.6v2.8h-1.6zM11.8 56.5h1.6v2.8h-1.6zM13.8 56.5h1.6v2.8h-1.6zM15.8 56.5h1.6v2.8h-1.6zM17.7 56.5h1.6v2.8h-1.6zM0.0 68.5h1.6v2.8h-1.6zM2.0 68.5h1.6v2.8h-1.6zM3.9 68.5h1.6v2.8h-1.6zM5.9 68.5h1.6v2.8h-1.6zM7.9 68.5h1.6v2.8h-1.6zM9.8 68.5h1.6v2.8h-1.6zM11.8 68.5h1.6v2.8h-1.6zM13.8 68.5h1.6v2.8h-1.6zM17.7 68.5h1.6v2.8h-1.6zM19.7 68.5h1.6v2.8h-1.6zM21.7 68.5h1.6v2.8h-1.6zM23.6 68.5h1.6v2.8h-1.6zM7.9 72.5h1.6v2.8h-1.6zM9.8 72.5h1.6v2.8h-1.6zM11.8 72.5h1.6v2.8h-1.6zM7.9 76.5h1.6v2.8h-1.6zM9.8 76.5h1.6v2.8h-1.6zM11.8 76.5h1.6v2.8h-1.6zM17.7 76.5h1.6v2.8h-1.6zM19.7 76.5h1.6v2.8h-1.6zM21.7 76.5h1.6v2.8h-1.6zM41.4 76.5h1.6v2.8h-1.6zM43.3 76.5h1.6v2.8h-1.6zM15.8 80.5h1.6v2.8h-1.6zM17.7 80.5h1.6v2.8h-1.6zM19.7 80.5h1.6v2.8h-1.6zM21.7 80.5h1.6v2.8h-1.6zM23.6 80.5h1.6v2.8h-1.6zM51.2 80.5h1.6v2.8h-1.6zM53.2 80.5h1.6v2.8h-1.6zM55.2 80.5h1.6v2.8h-1.6zM15.8 84.5h1.6v2.8h-1.6zM17.7 84.5h1.6v2.8h-1.6zM19.7 84.5h1.6v2.8h-1.6zM21.7 84.5h1.6v2.8h-1.6zM23.6 84.5h1.6v2.8h-1.6zM51.2 84.5h1.6v2.8h-1.6zM53.2 84.5h1.6v2.8h-1.6zM55.2 84.5h1.6v2.8h-1.6zM69.0 84.5h1.6v2.8h-1.6zM70.9 84.5h1.6v2.8h-1.6zM72.9 84.5h1.6v2.8h-1.6zM74.9 84.5h1.6v2.8h-1.6zM78.8 84.5h1.6v2.8h-1.6zM80.8 84.5h1.6v2.8h-1.6zM82.7 84.5h1.6v2.8h-1.6zM122.1 84.5h1.6v2.8h-1.6zM124.1 84.5h1.6v2.8h-1.6zM126.1 84.5h1.6v2.8h-1.6zM128.1 84.5h1.6v2.8h-1.6zM130.0 84.5h1.6v2.8h-1.6zM55.2 88.5h1.6v2.8h-1.6zM57.1 88.5h1.6v2.8h-1.6zM59.1 88.5h1.6v2.8h-1.6zM61.1 88.5h1.6v2.8h-1.6zM65.0 88.5h1.6v2.8h-1.6zM67.0 88.5h1.6v2.8h-1.6zM69.0 88.5h1.6v2.8h-1.6zM72.9 88.5h1.6v2.8h-1.6zM74.9 88.5h1.6v2.8h-1.6zM76.8 88.5h1.6v2.8h-1.6zM78.8 88.5h1.6v2.8h-1.6zM80.8 88.5h1.6v2.8h-1.6zM82.7 88.5h1.6v2.8h-1.6zM84.7 88.5h1.6v2.8h-1.6zM86.7 88.5h1.6v2.8h-1.6zM88.7 88.5h1.6v2.8h-1.6zM90.6 88.5h1.6v2.8h-1.6zM92.6 88.5h1.6v2.8h-1.6zM120.2 88.5h1.6v2.8h-1.6zM122.1 88.5h1.6v2.8h-1.6zM124.1 88.5h1.6v2.8h-1.6zM126.1 88.5h1.6v2.8h-1.6zM128.1 88.5h1.6v2.8h-1.6zM7.9 96.5h1.6v2.8h-1.6zM9.8 96.5h1.6v2.8h-1.6zM11.8 96.5h1.6v2.8h-1.6zM13.8 96.5h1.6v2.8h-1.6zM15.8 96.5h1.6v2.8h-1.6zM17.7 96.5h1.6v2.8h-1.6zM21.7 96.5h1.6v2.8h-1.6zM23.6 96.5h1.6v2.8h-1.6zM25.6 96.5h1.6v2.8h-1.6zM41.4 96.5h1.6v2.8h-1.6zM43.3 96.5h1.6v2.8h-1.6zM45.3 96.5h1.6v2.8h-1.6zM0.0 108.5h1.6v2.8h-1.6zM2.0 108.5h1.6v2.8h-1.6zM3.9 108.5h1.6v2.8h-1.6zM5.9 108.5h1.6v2.8h-1.6zM7.9 108.5h1.6v2.8h-1.6zM9.8 108.5h1.6v2.8h-1.6zM11.8 108.5h1.6v2.8h-1.6zM13.8 108.5h1.6v2.8h-1.6zM17.7 108.5h1.6v2.8h-1.6zM19.7 108.5h1.6v2.8h-1.6zM21.7 108.5h1.6v2.8h-1.6zM23.6 108.5h1.6v2.8h-1.6zM25.6 108.5h1.6v2.8h-1.6zM27.6 108.5h1.6v2.8h-1.6zM7.9 112.5h1.6v2.8h-1.6zM9.8 112.5h1.6v2.8h-1.6zM11.8 112.5h1.6v2.8h-1.6zM13.8 112.5h1.6v2.8h-1.6zM15.8 112.5h1.6v2.8h-1.6zM7.9 116.5h1.6v2.8h-1.6zM9.8 116.5h1.6v2.8h-1.6zM11.8 116.5h1.6v2.8h-1.6zM17.7 116.5h1.6v2.8h-1.6zM19.7 116.5h1.6v2.8h-1.6zM21.7 116.5h1.6v2.8h-1.6zM19.7 120.5h1.6v2.8h-1.6zM21.7 120.5h1.6v2.8h-1.6zM23.6 120.5h1.6v2.8h-1.6zM25.6 120.5h1.6v2.8h-1.6zM29.6 120.5h1.6v2.8h-1.6zM31.5 120.5h1.6v2.8h-1.6zM33.5 120.5h1.6v2.8h-1.6zM35.5 120.5h1.6v2.8h-1.6zM7.9 128.5h1.6v2.8h-1.6zM9.8 128.5h1.6v2.8h-1.6zM11.8 128.5h1.6v2.8h-1.6zM13.8 128.5h1.6v2.8h-1.6zM15.8 128.5h1.6v2.8h-1.6zM17.7 128.5h1.6v2.8h-1.6zM0.0 136.5h1.6v2.8h-1.6zM2.0 136.5h1.6v2.8h-1.6zM3.9 136.5h1.6v2.8h-1.6zM5.9 136.5h1.6v2.8h-1.6zM7.9 136.5h1.6v2.8h-1.6zM9.8 136.5h1.6v2.8h-1.6zM11.8 136.5h1.6v2.8h-1.6zM13.8 136.5h1.6v2.8h-1.6zM17.7 136.5h1.6v2.8h-1.6zM19.7 136.5h1.6v2.8h-1.6zM21.7 136.5h1.6v2.8h-1.6zM23.6 136.5h1.6v2.8h-1.6zM25.6 136.5h1.6v2.8h-1.6zM27.6 136.5h1.6v2.8h-1.6zM7.9 140.5h1.6v2.8h-1.6zM9.8 140.5h1.6v2.8h-1.6zM11.8 140.5h1.6v2.8h-1.6zM13.8 140.5h1.6v2.8h-1.6zM15.8 140.5h1.6v2.8h-1.6zM17.7 140.5h1.6v2.8h-1.6zM25.6 140.5h1.6v2.8h-1.6zM27.6 140.5h1.6v2.8h-1.6zM29.6 140.5h1.6v2.8h-1.6zM31.5 140.5h1.6v2.8h-1.6zM33.5 140.5h1.6v2.8h-1.6zM35.5 140.5h1.6v2.8h-1.6zM37.4 140.5h1.6v2.8h-1.6zM39.4 140.5h1.6v2.8h-1.6zM41.4 140.5h1.6v2.8h-1.6zM57.1 140.5h1.6v2.8h-1.6zM59.1 140.5h1.6v2.8h-1.6zM61.1 140.5h1.6v2.8h-1.6zM63.0 140.5h1.6v2.8h-1.6zM65.0 140.5h1.6v2.8h-1.6zM67.0 140.5h1.6v2.8h-1.6zM69.0 140.5h1.6v2.8h-1.6zM70.9 140.5h1.6v2.8h-1.6zM72.9 140.5h1.6v2.8h-1.6zM82.7 140.5h1.6v2.8h-1.6zM84.7 140.5h1.6v2.8h-1.6zM86.7 140.5h1.6v2.8h-1.6zM0.0 152.5h1.6v2.8h-1.6zM2.0 152.5h1.6v2.8h-1.6zM3.9 152.5h1.6v2.8h-1.6zM5.9 152.5h1.6v2.8h-1.6zM7.9 152.5h1.6v2.8h-1.6zM27.6 152.5h1.6v2.8h-1.6zM29.6 152.5h1.6v2.8h-1.6zM31.5 152.5h1.6v2.8h-1.6zM33.5 152.5h1.6v2.8h-1.6zM27.6 180.5h1.6v2.8h-1.6zM29.6 180.5h1.6v2.8h-1.6zM31.5 180.5h1.6v2.8h-1.6zM33.5 180.5h1.6v2.8h-1.6zM35.5 180.5h1.6v2.8h-1.6zM37.4 180.5h1.6v2.8h-1.6zM45.3 180.5h1.6v2.8h-1.6zM47.3 180.5h1.6v2.8h-1.6zM49.2 180.5h1.6v2.8h-1.6zM0.0 196.5h1.6v2.8h-1.6zM2.0 196.5h1.6v2.8h-1.6zM3.9 196.5h1.6v2.8h-1.6zM5.9 196.5h1.6v2.8h-1.6zM7.9 196.5h1.6v2.8h-1.6zM27.6 196.5h1.6v2.8h-1.6zM29.6 196.5h1.6v2.8h-1.6zM31.5 196.5h1.6v2.8h-1.6zM33.5 196.5h1.6v2.8h-1.6zM74.9 196.5h1.6v2.8h-1.6zM76.8 196.5h1.6v2.8h-1.6zM78.8 196.5h1.6v2.8h-1.6zM82.7 196.5h1.6v2.8h-1.6zM84.7 196.5h1.6v2.8h-1.6zM86.7 196.5h1.6v2.8h-1.6zM88.7 196.5h1.6v2.8h-1.6zM90.6 196.5h1.6v2.8h-1.6zM92.6 196.5h1.6v2.8h-1.6zM0.0 204.5h1.6v2.8h-1.6zM2.0 204.5h1.6v2.8h-1.6zM3.9 204.5h1.6v2.8h-1.6zM5.9 204.5h1.6v2.8h-1.6zM7.9 204.5h1.6v2.8h-1.6zM9.8 204.5h1.6v2.8h-1.6zM11.8 204.5h1.6v2.8h-1.6zM0.0 208.5h1.6v2.8h-1.6zM2.0 208.5h1.6v2.8h-1.6zM3.9 208.5h1.6v2.8h-1.6zM5.9 208.5h1.6v2.8h-1.6zM7.9 208.5h1.6v2.8h-1.6zM9.8 208.5h1.6v2.8h-1.6zM11.8 208.5h1.6v2.8h-1.6z" fill="#a8acb0"/><path d="M11.8 0.5h1.6v2.8h-1.6zM13.8 0.5h1.6v2.8h-1.6zM15.8 0.5h1.6v2.8h-1.6zM17.7 0.5h1.6v2.8h-1.6zM19.7 0.5h1.6v2.8h-1.6zM23.6 0.5h1.6v2.8h-1.6zM41.4 0.5h1.6v2.8h-1.6zM43.3 0.5h1.6v2.8h-1.6zM45.3 0.5h1.6v2.8h-1.6zM47.3 0.5h1.6v2.8h-1.6zM49.2 0.5h1.6v2.8h-1.6zM51.2 0.5h1.6v2.8h-1.6zM53.2 0.5h1.6v2.8h-1.6zM55.2 0.5h1.6v2.8h-1.6zM57.1 0.5h1.6v2.8h-1.6zM59.1 0.5h1.6v2.8h-1.6zM61.1 0.5h1.6v2.8h-1.6zM63.0 0.5h1.6v2.8h-1.6zM65.0 0.5h1.6v2.8h-1.6zM35.5 4.5h1.6v2.8h-1.6zM53.2 4.5h1.6v2.8h-1.6zM55.2 4.5h1.6v2.8h-1.6zM57.1 4.5h1.6v2.8h-1.6zM59.1 4.5h1.6v2.8h-1.6zM82.7 4.5h1.6v2.8h-1.6zM84.7 4.5h1.6v2.8h-1.6zM86.7 4.5h1.6v2.8h-1.6zM23.6 12.5h1.6v2.8h-1.6zM27.6 12.5h1.6v2.8h-1.6zM29.6 12.5h1.6v2.8h-1.6zM31.5 12.5h1.6v2.8h-1.6zM33.5 12.5h1.6v2.8h-1.6zM25.6 20.5h1.6v2.8h-1.6zM27.6 20.5h1.6v2.8h-1.6zM29.6 20.5h1.6v2.8h-1.6zM31.5 20.5h1.6v2.8h-1.6zM33.5 20.5h1.6v2.8h-1.6zM37.4 20.5h1.6v2.8h-1.6zM39.4 20.5h1.6v2.8h-1.6zM43.3 20.5h1.6v2.8h-1.6zM15.8 24.5h1.6v2.8h-1.6zM19.7 24.5h1.6v2.8h-1.6zM23.6 24.5h1.6v2.8h-1.6zM25.6 24.5h1.6v2.8h-1.6zM27.6 24.5h1.6v2.8h-1.6zM15.8 28.5h1.6v2.8h-1.6zM25.6 28.5h1.6v2.8h-1.6zM35.5 28.5h1.6v2.8h-1.6zM37.4 28.5h1.6v2.8h-1.6zM39.4 28.5h1.6v2.8h-1.6zM41.4 28.5h1.6v2.8h-1.6zM45.3 28.5h1.6v2.8h-1.6zM15.8 32.5h1.6v2.8h-1.6zM17.7 32.5h1.6v2.8h-1.6zM19.7 32.5h1.6v2.8h-1.6zM21.7 32.5h1.6v2.8h-1.6zM25.6 32.5h1.6v2.8h-1.6zM29.6 32.5h1.6v2.8h-1.6zM31.5 32.5h1.6v2.8h-1.6zM33.5 32.5h1.6v2.8h-1.6zM35.5 32.5h1.6v2.8h-1.6zM39.4 32.5h1.6v2.8h-1.6zM41.4 32.5h1.6v2.8h-1.6zM43.3 32.5h1.6v2.8h-1.6zM45.3 32.5h1.6v2.8h-1.6zM47.3 32.5h1.6v2.8h-1.6zM49.2 32.5h1.6v2.8h-1.6zM51.2 32.5h1.6v2.8h-1.6zM53.2 32.5h1.6v2.8h-1.6zM7.9 36.5h1.6v2.8h-1.6zM21.7 40.5h1.6v2.8h-1.6zM23.6 40.5h1.6v2.8h-1.6zM0.0 44.5h1.6v2.8h-1.6zM23.6 52.5h1.6v2.8h-1.6zM25.6 52.5h1.6v2.8h-1.6zM27.6 52.5h1.6v2.8h-1.6zM31.5 52.5h1.6v2.8h-1.6zM33.5 52.5h1.6v2.8h-1.6zM37.4 52.5h1.6v2.8h-1.6zM39.4 52.5h1.6v2.8h-1.6zM43.3 52.5h1.6v2.8h-1.6zM21.7 56.5h1.6v2.8h-1.6zM25.6 56.5h1.6v2.8h-1.6zM29.6 56.5h1.6v2.8h-1.6zM31.5 56.5h1.6v2.8h-1.6zM35.5 56.5h1.6v2.8h-1.6zM39.4 56.5h1.6v2.8h-1.6zM41.4 56.5h1.6v2.8h-1.6zM45.3 56.5h1.6v2.8h-1.6zM49.2 56.5h1.6v2.8h-1.6zM51.2 56.5h1.6v2.8h-1.6zM0.0 60.5h1.6v2.8h-1.6zM25.6 68.5h1.6v2.8h-1.6zM27.6 68.5h1.6v2.8h-1.6zM29.6 68.5h1.6v2.8h-1.6zM31.5 68.5h1.6v2.8h-1.6zM33.5 68.5h1.6v2.8h-1.6zM35.5 68.5h1.6v2.8h-1.6zM37.4 68.5h1.6v2.8h-1.6zM39.4 68.5h1.6v2.8h-1.6zM43.3 68.5h1.6v2.8h-1.6zM45.3 68.5h1.6v2.8h-1.6zM49.2 68.5h1.6v2.8h-1.6zM15.8 72.5h1.6v2.8h-1.6zM17.7 72.5h1.6v2.8h-1.6zM19.7 72.5h1.6v2.8h-1.6zM21.7 72.5h1.6v2.8h-1.6zM23.6 72.5h1.6v2.8h-1.6zM25.6 72.5h1.6v2.8h-1.6zM27.6 72.5h1.6v2.8h-1.6zM29.6 72.5h1.6v2.8h-1.6zM33.5 72.5h1.6v2.8h-1.6zM37.4 72.5h1.6v2.8h-1.6zM41.4 72.5h1.6v2.8h-1.6zM43.3 72.5h1.6v2.8h-1.6zM47.3 72.5h1.6v2.8h-1.6zM49.2 72.5h1.6v2.8h-1.6zM53.2 72.5h1.6v2.8h-1.6zM55.2 72.5h1.6v2.8h-1.6zM59.1 72.5h1.6v2.8h-1.6zM61.1 72.5h1.6v2.8h-1.6zM65.0 72.5h1.6v2.8h-1.6zM67.0 72.5h1.6v2.8h-1.6zM70.9 72.5h1.6v2.8h-1.6zM74.9 72.5h1.6v2.8h-1.6zM76.8 72.5h1.6v2.8h-1.6zM15.8 76.5h1.6v2.8h-1.6zM25.6 76.5h1.6v2.8h-1.6zM27.6 76.5h1.6v2.8h-1.6zM29.6 76.5h1.6v2.8h-1.6zM31.5 76.5h1.6v2.8h-1.6zM33.5 76.5h1.6v2.8h-1.6zM35.5 76.5h1.6v2.8h-1.6zM37.4 76.5h1.6v2.8h-1.6zM47.3 76.5h1.6v2.8h-1.6zM49.2 76.5h1.6v2.8h-1.6zM51.2 76.5h1.6v2.8h-1.6zM53.2 76.5h1.6v2.8h-1.6zM55.2 76.5h1.6v2.8h-1.6zM59.1 76.5h1.6v2.8h-1.6zM61.1 76.5h1.6v2.8h-1.6zM63.0 76.5h1.6v2.8h-1.6zM65.0 76.5h1.6v2.8h-1.6zM69.0 76.5h1.6v2.8h-1.6zM70.9 76.5h1.6v2.8h-1.6zM72.9 76.5h1.6v2.8h-1.6zM74.9 76.5h1.6v2.8h-1.6zM76.8 76.5h1.6v2.8h-1.6zM80.8 76.5h1.6v2.8h-1.6zM27.6 80.5h1.6v2.8h-1.6zM29.6 80.5h1.6v2.8h-1.6zM33.5 80.5h1.6v2.8h-1.6zM37.4 80.5h1.6v2.8h-1.6zM39.4 80.5h1.6v2.8h-1.6zM41.4 80.5h1.6v2.8h-1.6zM43.3 80.5h1.6v2.8h-1.6zM45.3 80.5h1.6v2.8h-1.6zM47.3 80.5h1.6v2.8h-1.6zM49.2 80.5h1.6v2.8h-1.6zM57.1 80.5h1.6v2.8h-1.6zM59.1 80.5h1.6v2.8h-1.6zM61.1 80.5h1.6v2.8h-1.6zM63.0 80.5h1.6v2.8h-1.6zM67.0 80.5h1.6v2.8h-1.6zM69.0 80.5h1.6v2.8h-1.6zM72.9 80.5h1.6v2.8h-1.6zM74.9 80.5h1.6v2.8h-1.6zM78.8 80.5h1.6v2.8h-1.6zM82.7 80.5h1.6v2.8h-1.6zM86.7 80.5h1.6v2.8h-1.6zM88.7 80.5h1.6v2.8h-1.6zM90.6 80.5h1.6v2.8h-1.6zM92.6 80.5h1.6v2.8h-1.6zM94.6 80.5h1.6v2.8h-1.6zM96.5 80.5h1.6v2.8h-1.6zM98.5 80.5h1.6v2.8h-1.6zM100.5 80.5h1.6v2.8h-1.6zM102.4 80.5h1.6v2.8h-1.6zM104.4 80.5h1.6v2.8h-1.6zM106.4 80.5h1.6v2.8h-1.6zM108.3 80.5h1.6v2.8h-1.6zM110.3 80.5h1.6v2.8h-1.6zM112.3 80.5h1.6v2.8h-1.6zM116.2 80.5h1.6v2.8h-1.6zM120.2 80.5h1.6v2.8h-1.6zM122.1 80.5h1.6v2.8h-1.6zM124.1 80.5h1.6v2.8h-1.6zM126.1 80.5h1.6v2.8h-1.6zM27.6 84.5h1.6v2.8h-1.6zM29.6 84.5h1.6v2.8h-1.6zM33.5 84.5h1.6v2.8h-1.6zM37.4 84.5h1.6v2.8h-1.6zM39.4 84.5h1.6v2.8h-1.6zM41.4 84.5h1.6v2.8h-1.6zM43.3 84.5h1.6v2.8h-1.6zM45.3 84.5h1.6v2.8h-1.6zM47.3 84.5h1.6v2.8h-1.6zM49.2 84.5h1.6v2.8h-1.6zM57.1 84.5h1.6v2.8h-1.6zM59.1 84.5h1.6v2.8h-1.6zM63.0 84.5h1.6v2.8h-1.6zM65.0 84.5h1.6v2.8h-1.6zM76.8 84.5h1.6v2.8h-1.6zM84.7 84.5h1.6v2.8h-1.6zM86.7 84.5h1.6v2.8h-1.6zM88.7 84.5h1.6v2.8h-1.6zM90.6 84.5h1.6v2.8h-1.6zM92.6 84.5h1.6v2.8h-1.6zM94.6 84.5h1.6v2.8h-1.6zM96.5 84.5h1.6v2.8h-1.6zM98.5 84.5h1.6v2.8h-1.6zM100.5 84.5h1.6v2.8h-1.6zM102.4 84.5h1.6v2.8h-1.6zM104.4 84.5h1.6v2.8h-1.6zM106.4 84.5h1.6v2.8h-1.6zM108.3 84.5h1.6v2.8h-1.6zM110.3 84.5h1.6v2.8h-1.6zM114.3 84.5h1.6v2.8h-1.6zM118.2 84.5h1.6v2.8h-1.6zM132.0 84.5h1.6v2.8h-1.6zM134.0 84.5h1.6v2.8h-1.6zM135.9 84.5h1.6v2.8h-1.6zM15.8 88.5h1.6v2.8h-1.6zM17.7 88.5h1.6v2.8h-1.6zM19.7 88.5h1.6v2.8h-1.6zM21.7 88.5h1.6v2.8h-1.6zM23.6 88.5h1.6v2.8h-1.6zM25.6 88.5h1.6v2.8h-1.6zM27.6 88.5h1.6v2.8h-1.6zM29.6 88.5h1.6v2.8h-1.6zM31.5 88.5h1.6v2.8h-1.6zM33.5 88.5h1.6v2.8h-1.6zM35.5 88.5h1.6v2.8h-1.6zM37.4 88.5h1.6v2.8h-1.6zM39.4 88.5h1.6v2.8h-1.6zM41.4 88.5h1.6v2.8h-1.6zM43.3 88.5h1.6v2.8h-1.6zM45.3 88.5h1.6v2.8h-1.6zM47.3 88.5h1.6v2.8h-1.6zM51.2 88.5h1.6v2.8h-1.6zM63.0 88.5h1.6v2.8h-1.6zM70.9 88.5h1.6v2.8h-1.6zM94.6 88.5h1.6v2.8h-1.6zM96.5 88.5h1.6v2.8h-1.6zM98.5 88.5h1.6v2.8h-1.6zM100.5 88.5h1.6v2.8h-1.6zM104.4 88.5h1.6v2.8h-1.6zM106.4 88.5h1.6v2.8h-1.6zM108.3 88.5h1.6v2.8h-1.6zM110.3 88.5h1.6v2.8h-1.6zM112.3 88.5h1.6v2.8h-1.6zM114.3 88.5h1.6v2.8h-1.6zM116.2 88.5h1.6v2.8h-1.6zM130.0 88.5h1.6v2.8h-1.6zM132.0 88.5h1.6v2.8h-1.6zM7.9 92.5h1.6v2.8h-1.6zM29.6 96.5h1.6v2.8h-1.6zM31.5 96.5h1.6v2.8h-1.6zM33.5 96.5h1.6v2.8h-1.6zM35.5 96.5h1.6v2.8h-1.6zM37.4 96.5h1.6v2.8h-1.6zM39.4 96.5h1.6v2.8h-1.6zM47.3 96.5h1.6v2.8h-1.6zM49.2 96.5h1.6v2.8h-1.6zM51.2 96.5h1.6v2.8h-1.6zM53.2 96.5h1.6v2.8h-1.6zM55.2 96.5h1.6v2.8h-1.6zM57.1 96.5h1.6v2.8h-1.6zM59.1 96.5h1.6v2.8h-1.6zM61.1 96.5h1.6v2.8h-1.6zM63.0 96.5h1.6v2.8h-1.6zM65.0 96.5h1.6v2.8h-1.6zM67.0 96.5h1.6v2.8h-1.6zM69.0 96.5h1.6v2.8h-1.6zM72.9 96.5h1.6v2.8h-1.6zM74.9 96.5h1.6v2.8h-1.6zM76.8 96.5h1.6v2.8h-1.6zM78.8 96.5h1.6v2.8h-1.6zM80.8 96.5h1.6v2.8h-1.6zM82.7 96.5h1.6v2.8h-1.6zM84.7 96.5h1.6v2.8h-1.6zM86.7 96.5h1.6v2.8h-1.6zM88.7 96.5h1.6v2.8h-1.6zM90.6 96.5h1.6v2.8h-1.6zM92.6 96.5h1.6v2.8h-1.6zM96.5 96.5h1.6v2.8h-1.6zM98.5 96.5h1.6v2.8h-1.6zM100.5 96.5h1.6v2.8h-1.6zM102.4 96.5h1.6v2.8h-1.6zM104.4 96.5h1.6v2.8h-1.6zM106.4 96.5h1.6v2.8h-1.6zM108.3 96.5h1.6v2.8h-1.6zM110.3 96.5h1.6v2.8h-1.6zM112.3 96.5h1.6v2.8h-1.6zM114.3 96.5h1.6v2.8h-1.6zM116.2 96.5h1.6v2.8h-1.6zM118.2 96.5h1.6v2.8h-1.6zM0.0 100.5h1.6v2.8h-1.6zM29.6 108.5h1.6v2.8h-1.6zM31.5 108.5h1.6v2.8h-1.6zM33.5 108.5h1.6v2.8h-1.6zM35.5 108.5h1.6v2.8h-1.6zM37.4 108.5h1.6v2.8h-1.6zM39.4 108.5h1.6v2.8h-1.6zM41.4 108.5h1.6v2.8h-1.6zM43.3 108.5h1.6v2.8h-1.6zM47.3 108.5h1.6v2.8h-1.6zM49.2 108.5h1.6v2.8h-1.6zM51.2 108.5h1.6v2.8h-1.6zM53.2 108.5h1.6v2.8h-1.6zM55.2 108.5h1.6v2.8h-1.6zM57.1 108.5h1.6v2.8h-1.6zM59.1 108.5h1.6v2.8h-1.6zM63.0 108.5h1.6v2.8h-1.6zM19.7 112.5h1.6v2.8h-1.6zM23.6 112.5h1.6v2.8h-1.6zM27.6 112.5h1.6v2.8h-1.6zM29.6 112.5h1.6v2.8h-1.6zM31.5 112.5h1.6v2.8h-1.6zM15.8 116.5h1.6v2.8h-1.6zM25.6 116.5h1.6v2.8h-1.6zM29.6 116.5h1.6v2.8h-1.6zM33.5 116.5h1.6v2.8h-1.6zM35.5 116.5h1.6v2.8h-1.6zM39.4 116.5h1.6v2.8h-1.6zM43.3 116.5h1.6v2.8h-1.6zM45.3 116.5h1.6v2.8h-1.6zM49.2 116.5h1.6v2.8h-1.6zM51.2 116.5h1.6v2.8h-1.6zM53.2 116.5h1.6v2.8h-1.6zM55.2 116.5h1.6v2.8h-1.6zM57.1 116.5h1.6v2.8h-1.6zM59.1 116.5h1.6v2.8h-1.6zM61.1 116.5h1.6v2.8h-1.6zM65.0 116.5h1.6v2.8h-1.6zM67.0 116.5h1.6v2.8h-1.6zM69.0 116.5h1.6v2.8h-1.6zM70.9 116.5h1.6v2.8h-1.6zM74.9 116.5h1.6v2.8h-1.6zM15.8 120.5h1.6v2.8h-1.6zM17.7 120.5h1.6v2.8h-1.6zM27.6 120.5h1.6v2.8h-1.6zM37.4 120.5h1.6v2.8h-1.6zM39.4 120.5h1.6v2.8h-1.6zM41.4 120.5h1.6v2.8h-1.6zM43.3 120.5h1.6v2.8h-1.6zM45.3 120.5h1.6v2.8h-1.6zM47.3 120.5h1.6v2.8h-1.6zM49.2 120.5h1.6v2.8h-1.6zM51.2 120.5h1.6v2.8h-1.6zM55.2 120.5h1.6v2.8h-1.6zM59.1 120.5h1.6v2.8h-1.6zM63.0 120.5h1.6v2.8h-1.6zM65.0 120.5h1.6v2.8h-1.6zM67.0 120.5h1.6v2.8h-1.6zM69.0 120.5h1.6v2.8h-1.6zM70.9 120.5h1.6v2.8h-1.6zM72.9 120.5h1.6v2.8h-1.6zM74.9 120.5h1.6v2.8h-1.6zM76.8 120.5h1.6v2.8h-1.6zM78.8 120.5h1.6v2.8h-1.6zM7.9 124.5h1.6v2.8h-1.6zM21.7 128.5h1.6v2.8h-1.6zM23.6 128.5h1.6v2.8h-1.6zM0.0 132.5h1.6v2.8h-1.6zM29.6 136.5h1.6v2.8h-1.6zM31.5 136.5h1.6v2.8h-1.6zM33.5 136.5h1.6v2.8h-1.6zM37.4 136.5h1.6v2.8h-1.6zM21.7 140.5h1.6v2.8h-1.6zM23.6 140.5h1.6v2.8h-1.6zM43.3 140.5h1.6v2.8h-1.6zM45.3 140.5h1.6v2.8h-1.6zM49.2 140.5h1.6v2.8h-1.6zM53.2 140.5h1.6v2.8h-1.6zM55.2 140.5h1.6v2.8h-1.6zM74.9 140.5h1.6v2.8h-1.6zM76.8 140.5h1.6v2.8h-1.6zM78.8 140.5h1.6v2.8h-1.6zM80.8 140.5h1.6v2.8h-1.6zM88.7 140.5h1.6v2.8h-1.6zM90.6 140.5h1.6v2.8h-1.6zM92.6 140.5h1.6v2.8h-1.6zM0.0 144.5h1.6v2.8h-1.6zM11.8 152.5h1.6v2.8h-1.6zM13.8 152.5h1.6v2.8h-1.6zM15.8 152.5h1.6v2.8h-1.6zM17.7 152.5h1.6v2.8h-1.6zM19.7 152.5h1.6v2.8h-1.6zM23.6 152.5h1.6v2.8h-1.6zM35.5 152.5h1.6v2.8h-1.6zM7.9 156.5h1.6v2.8h-1.6zM15.8 160.5h1.6v2.8h-1.6zM17.7 160.5h1.6v2.8h-1.6zM19.7 160.5h1.6v2.8h-1.6zM21.7 160.5h1.6v2.8h-1.6zM23.6 160.5h1.6v2.8h-1.6zM27.6 160.5h1.6v2.8h-1.6zM29.6 160.5h1.6v2.8h-1.6zM31.5 160.5h1.6v2.8h-1.6zM33.5 160.5h1.6v2.8h-1.6zM35.5 160.5h1.6v2.8h-1.6zM37.4 160.5h1.6v2.8h-1.6zM39.4 160.5h1.6v2.8h-1.6zM41.4 160.5h1.6v2.8h-1.6zM43.3 160.5h1.6v2.8h-1.6zM45.3 160.5h1.6v2.8h-1.6zM47.3 160.5h1.6v2.8h-1.6zM51.2 160.5h1.6v2.8h-1.6zM53.2 160.5h1.6v2.8h-1.6zM55.2 160.5h1.6v2.8h-1.6zM57.1 160.5h1.6v2.8h-1.6zM59.1 160.5h1.6v2.8h-1.6zM61.1 160.5h1.6v2.8h-1.6zM63.0 160.5h1.6v2.8h-1.6zM65.0 160.5h1.6v2.8h-1.6zM67.0 160.5h1.6v2.8h-1.6zM69.0 160.5h1.6v2.8h-1.6zM72.9 160.5h1.6v2.8h-1.6zM74.9 160.5h1.6v2.8h-1.6zM76.8 160.5h1.6v2.8h-1.6zM78.8 160.5h1.6v2.8h-1.6zM80.8 160.5h1.6v2.8h-1.6zM82.7 160.5h1.6v2.8h-1.6zM84.7 160.5h1.6v2.8h-1.6zM86.7 160.5h1.6v2.8h-1.6zM88.7 160.5h1.6v2.8h-1.6zM90.6 160.5h1.6v2.8h-1.6zM92.6 160.5h1.6v2.8h-1.6zM15.8 164.5h1.6v2.8h-1.6zM17.7 164.5h1.6v2.8h-1.6zM19.7 164.5h1.6v2.8h-1.6zM21.7 164.5h1.6v2.8h-1.6zM25.6 164.5h1.6v2.8h-1.6zM27.6 164.5h1.6v2.8h-1.6zM29.6 164.5h1.6v2.8h-1.6zM31.5 164.5h1.6v2.8h-1.6zM33.5 164.5h1.6v2.8h-1.6zM35.5 164.5h1.6v2.8h-1.6zM37.4 164.5h1.6v2.8h-1.6zM39.4 164.5h1.6v2.8h-1.6zM41.4 164.5h1.6v2.8h-1.6zM43.3 164.5h1.6v2.8h-1.6zM45.3 164.5h1.6v2.8h-1.6zM49.2 164.5h1.6v2.8h-1.6zM51.2 164.5h1.6v2.8h-1.6zM53.2 164.5h1.6v2.8h-1.6zM55.2 164.5h1.6v2.8h-1.6zM57.1 164.5h1.6v2.8h-1.6zM59.1 164.5h1.6v2.8h-1.6zM61.1 164.5h1.6v2.8h-1.6zM63.0 164.5h1.6v2.8h-1.6zM65.0 164.5h1.6v2.8h-1.6zM67.0 164.5h1.6v2.8h-1.6zM70.9 164.5h1.6v2.8h-1.6zM72.9 164.5h1.6v2.8h-1.6zM74.9 164.5h1.6v2.8h-1.6zM76.8 164.5h1.6v2.8h-1.6zM78.8 164.5h1.6v2.8h-1.6zM80.8 164.5h1.6v2.8h-1.6zM82.7 164.5h1.6v2.8h-1.6zM84.7 164.5h1.6v2.8h-1.6zM86.7 164.5h1.6v2.8h-1.6zM88.7 164.5h1.6v2.8h-1.6zM90.6 164.5h1.6v2.8h-1.6zM15.8 168.5h1.6v2.8h-1.6zM17.7 168.5h1.6v2.8h-1.6zM19.7 168.5h1.6v2.8h-1.6zM21.7 168.5h1.6v2.8h-1.6zM23.6 168.5h1.6v2.8h-1.6zM25.6 168.5h1.6v2.8h-1.6zM29.6 168.5h1.6v2.8h-1.6zM31.5 168.5h1.6v2.8h-1.6zM33.5 168.5h1.6v2.8h-1.6zM35.5 168.5h1.6v2.8h-1.6zM37.4 168.5h1.6v2.8h-1.6zM39.4 168.5h1.6v2.8h-1.6zM41.4 168.5h1.6v2.8h-1.6zM43.3 168.5h1.6v2.8h-1.6zM45.3 168.5h1.6v2.8h-1.6zM47.3 168.5h1.6v2.8h-1.6zM49.2 168.5h1.6v2.8h-1.6zM53.2 168.5h1.6v2.8h-1.6zM55.2 168.5h1.6v2.8h-1.6zM57.1 168.5h1.6v2.8h-1.6zM59.1 168.5h1.6v2.8h-1.6zM61.1 168.5h1.6v2.8h-1.6zM63.0 168.5h1.6v2.8h-1.6zM65.0 168.5h1.6v2.8h-1.6zM67.0 168.5h1.6v2.8h-1.6zM69.0 168.5h1.6v2.8h-1.6zM70.9 168.5h1.6v2.8h-1.6zM74.9 168.5h1.6v2.8h-1.6zM76.8 168.5h1.6v2.8h-1.6zM78.8 168.5h1.6v2.8h-1.6zM80.8 168.5h1.6v2.8h-1.6zM82.7 168.5h1.6v2.8h-1.6zM84.7 168.5h1.6v2.8h-1.6zM86.7 168.5h1.6v2.8h-1.6zM88.7 168.5h1.6v2.8h-1.6zM90.6 168.5h1.6v2.8h-1.6zM92.6 168.5h1.6v2.8h-1.6zM94.6 168.5h1.6v2.8h-1.6zM15.8 172.5h1.6v2.8h-1.6zM17.7 172.5h1.6v2.8h-1.6zM19.7 172.5h1.6v2.8h-1.6zM21.7 172.5h1.6v2.8h-1.6zM23.6 172.5h1.6v2.8h-1.6zM27.6 172.5h1.6v2.8h-1.6zM29.6 172.5h1.6v2.8h-1.6zM31.5 172.5h1.6v2.8h-1.6zM33.5 172.5h1.6v2.8h-1.6zM35.5 172.5h1.6v2.8h-1.6zM37.4 172.5h1.6v2.8h-1.6zM39.4 172.5h1.6v2.8h-1.6zM41.4 172.5h1.6v2.8h-1.6zM43.3 172.5h1.6v2.8h-1.6zM45.3 172.5h1.6v2.8h-1.6zM47.3 172.5h1.6v2.8h-1.6zM51.2 172.5h1.6v2.8h-1.6zM53.2 172.5h1.6v2.8h-1.6zM55.2 172.5h1.6v2.8h-1.6zM57.1 172.5h1.6v2.8h-1.6zM59.1 172.5h1.6v2.8h-1.6zM61.1 172.5h1.6v2.8h-1.6zM63.0 172.5h1.6v2.8h-1.6zM65.0 172.5h1.6v2.8h-1.6zM67.0 172.5h1.6v2.8h-1.6zM69.0 172.5h1.6v2.8h-1.6zM72.9 172.5h1.6v2.8h-1.6zM74.9 172.5h1.6v2.8h-1.6zM76.8 172.5h1.6v2.8h-1.6zM78.8 172.5h1.6v2.8h-1.6zM80.8 172.5h1.6v2.8h-1.6zM82.7 172.5h1.6v2.8h-1.6zM84.7 172.5h1.6v2.8h-1.6zM86.7 172.5h1.6v2.8h-1.6zM88.7 172.5h1.6v2.8h-1.6zM90.6 172.5h1.6v2.8h-1.6zM7.9 176.5h1.6v2.8h-1.6zM9.8 176.5h1.6v2.8h-1.6zM7.9 180.5h1.6v2.8h-1.6zM9.8 180.5h1.6v2.8h-1.6zM11.8 180.5h1.6v2.8h-1.6zM15.8 180.5h1.6v2.8h-1.6zM17.7 180.5h1.6v2.8h-1.6zM21.7 180.5h1.6v2.8h-1.6zM23.6 180.5h1.6v2.8h-1.6zM39.4 180.5h1.6v2.8h-1.6zM41.4 180.5h1.6v2.8h-1.6zM43.3 180.5h1.6v2.8h-1.6zM51.2 180.5h1.6v2.8h-1.6zM53.2 180.5h1.6v2.8h-1.6zM55.2 180.5h1.6v2.8h-1.6zM57.1 180.5h1.6v2.8h-1.6zM59.1 180.5h1.6v2.8h-1.6zM61.1 180.5h1.6v2.8h-1.6zM63.0 180.5h1.6v2.8h-1.6zM65.0 180.5h1.6v2.8h-1.6zM69.0 180.5h1.6v2.8h-1.6zM70.9 180.5h1.6v2.8h-1.6zM72.9 180.5h1.6v2.8h-1.6zM0.0 184.5h1.6v2.8h-1.6zM2.0 184.5h1.6v2.8h-1.6zM0.0 188.5h1.6v2.8h-1.6zM2.0 188.5h1.6v2.8h-1.6zM3.9 188.5h1.6v2.8h-1.6zM5.9 188.5h1.6v2.8h-1.6zM7.9 188.5h1.6v2.8h-1.6zM9.8 188.5h1.6v2.8h-1.6zM11.8 188.5h1.6v2.8h-1.6zM13.8 188.5h1.6v2.8h-1.6zM15.8 188.5h1.6v2.8h-1.6zM17.7 188.5h1.6v2.8h-1.6zM19.7 188.5h1.6v2.8h-1.6zM21.7 188.5h1.6v2.8h-1.6zM25.6 188.5h1.6v2.8h-1.6zM29.6 188.5h1.6v2.8h-1.6zM31.5 188.5h1.6v2.8h-1.6zM33.5 188.5h1.6v2.8h-1.6zM35.5 188.5h1.6v2.8h-1.6zM37.4 188.5h1.6v2.8h-1.6zM39.4 188.5h1.6v2.8h-1.6zM41.4 188.5h1.6v2.8h-1.6zM43.3 188.5h1.6v2.8h-1.6zM45.3 188.5h1.6v2.8h-1.6zM47.3 188.5h1.6v2.8h-1.6zM49.2 188.5h1.6v2.8h-1.6zM11.8 196.5h1.6v2.8h-1.6zM13.8 196.5h1.6v2.8h-1.6zM15.8 196.5h1.6v2.8h-1.6zM17.7 196.5h1.6v2.8h-1.6zM19.7 196.5h1.6v2.8h-1.6zM23.6 196.5h1.6v2.8h-1.6zM35.5 196.5h1.6v2.8h-1.6zM37.4 196.5h1.6v2.8h-1.6zM39.4 196.5h1.6v2.8h-1.6zM41.4 196.5h1.6v2.8h-1.6zM43.3 196.5h1.6v2.8h-1.6zM45.3 196.5h1.6v2.8h-1.6zM47.3 196.5h1.6v2.8h-1.6zM51.2 196.5h1.6v2.8h-1.6zM53.2 196.5h1.6v2.8h-1.6zM55.2 196.5h1.6v2.8h-1.6zM59.1 196.5h1.6v2.8h-1.6zM61.1 196.5h1.6v2.8h-1.6zM65.0 196.5h1.6v2.8h-1.6zM67.0 196.5h1.6v2.8h-1.6zM70.9 196.5h1.6v2.8h-1.6zM72.9 196.5h1.6v2.8h-1.6zM80.8 196.5h1.6v2.8h-1.6zM94.6 196.5h1.6v2.8h-1.6zM96.5 196.5h1.6v2.8h-1.6zM98.5 196.5h1.6v2.8h-1.6zM13.8 204.5h1.6v2.8h-1.6zM15.8 204.5h1.6v2.8h-1.6zM17.7 204.5h1.6v2.8h-1.6zM19.7 204.5h1.6v2.8h-1.6zM21.7 204.5h1.6v2.8h-1.6zM23.6 204.5h1.6v2.8h-1.6zM27.6 204.5h1.6v2.8h-1.6zM31.5 204.5h1.6v2.8h-1.6zM33.5 204.5h1.6v2.8h-1.6zM35.5 204.5h1.6v2.8h-1.6zM37.4 204.5h1.6v2.8h-1.6zM39.4 204.5h1.6v2.8h-1.6zM41.4 204.5h1.6v2.8h-1.6zM13.8 208.5h1.6v2.8h-1.6zM15.8 208.5h1.6v2.8h-1.6zM17.7 208.5h1.6v2.8h-1.6zM19.7 208.5h1.6v2.8h-1.6zM21.7 208.5h1.6v2.8h-1.6zM23.6 208.5h1.6v2.8h-1.6zM27.6 208.5h1.6v2.8h-1.6zM31.5 208.5h1.6v2.8h-1.6zM33.5 208.5h1.6v2.8h-1.6zM35.5 208.5h1.6v2.8h-1.6zM37.4 208.5h1.6v2.8h-1.6zM39.4 208.5h1.6v2.8h-1.6zM41.4 208.5h1.6v2.8h-1.6z" fill="#757b81"/></svg><div class="abs" style="left:1627px;top:615px;width:27px;height:4px;background:#10558f"></div></div><div id="status" class="abs"><svg class="abs" style="left:28px;top:9px" width="24" height="26" viewBox="0 0 24 26">
<circle cx="5.6" cy="3.2" r="2.6" fill="none" stroke="#a8adb2" stroke-width="2"/>
<circle cx="16.1" cy="6.4" r="2.6" fill="none" stroke="#a8adb2" stroke-width="2"/>
<circle cx="5.6" cy="21.4" r="2.6" fill="none" stroke="#a8adb2" stroke-width="2"/>
<path d="M5.6 5.8 V18.8 M5.6 15.5 Q16.1 14.5 16.1 9" fill="none" stroke="#a8adb2" stroke-width="2.6"/>
</svg><div class="it" style="left:59px;top:2px;height:43px;line-height:43px;color:#a8adb2">master</div><svg class="abs" style="left:160px;top:10px" width="26" height="24" viewBox="0 0 26 24">
<path d="M4 10 A9 9 0 0 1 20 6" fill="none" stroke="#a8adb2" stroke-width="3"/>
<path d="M22 14 A9 9 0 0 1 6 18" fill="none" stroke="#a8adb2" stroke-width="3"/>
<path d="M16 2 L23 2 L22 9 Z M10 22 L3 22 L4 15 Z" fill="#a8adb2"/>
</svg><svg class="abs" style="left:206px;top:9px" width="26" height="26" viewBox="0 0 26 26">
<circle cx="13" cy="13" r="11" fill="#a8adb2"/><path d="M8.3 8.3 L17.7 17.7 M17.7 8.3 L8.3 17.7" stroke="#24292e" stroke-width="3"/>
</svg><div class="it" style="left:239px;top:2px;height:43px;line-height:43px;color:#a8adb2">0</div><svg class="abs" style="left:260px;top:9px" width="24" height="24" viewBox="0 0 24 24">
<path d="M12 1 L23 23 L1 23 Z" fill="#a8adb2"/><path d="M12 9 V17 M12 19 V21" stroke="#24292e" stroke-width="2.2"/>
</svg><div class="it" style="left:291px;top:2px;height:43px;line-height:43px;color:#a8adb2">0</div><svg class="abs" style="left:1486px;top:4px" width="28" height="34" viewBox="0 0 28 34">
<path d="M3.1 15.5 V12.5 A10.9 10.9 0 0 1 24.9 12.5 V15.5" fill="none" stroke="#a8adb2" stroke-width="2.3"/>
<path d="M3.8 13 L24.2 13 L23.6 27.2 Q14 31.8 4.4 27.2 Z" fill="#a8adb2"/>
<path d="M6 14 Q14 17.8 22 14 L21.4 18.5 Q20.8 21.8 19.2 21.8 Q18 21.8 17.8 19.5 L16.4 25 Q15 27 13.7 25 L12.6 19.5 L11.6 22.5 Q9.2 25 7.3 22.5 L6.4 18.5 Z" fill="#24292e"/>
<ellipse cx="14" cy="12.2" rx="8.1" ry="2.7" fill="#24292e" stroke="#a8adb2" stroke-width="2"/>
</svg><div class="it" style="left:1542px;top:2px;height:43px;line-height:43px;color:#a8adb2">Ln 41, Col 49</div><div class="it" style="left:1728px;top:2px;height:43px;line-height:43px;color:#a8adb2">Tab Size: 4</div><div class="it" style="left:1890px;top:2px;height:43px;line-height:43px;color:#a8adb2">UTF-8</div><div class="it" style="left:1980px;top:2px;height:43px;line-height:43px;color:#a8adb2">CRLF</div><div class="it" style="left:2058px;top:2px;height:43px;line-height:43px;color:#a8adb2">JavaScript</div><svg class="abs" style="left:2209px;top:7px" width="30" height="30" viewBox="0 0 30 30">
<circle cx="14.9" cy="14.9" r="14" fill="#a8adb2"/><ellipse cx="10" cy="9.4" rx="2" ry="2.5" fill="#24292e"/><ellipse cx="19.8" cy="9.4" rx="2" ry="2.5" fill="#24292e"/>
<path d="M7.4 17.6 Q15 28.2 23.4 17.6" fill="none" stroke="#24292e" stroke-width="2.2" stroke-linecap="round"/>
</svg></div></body></html>
